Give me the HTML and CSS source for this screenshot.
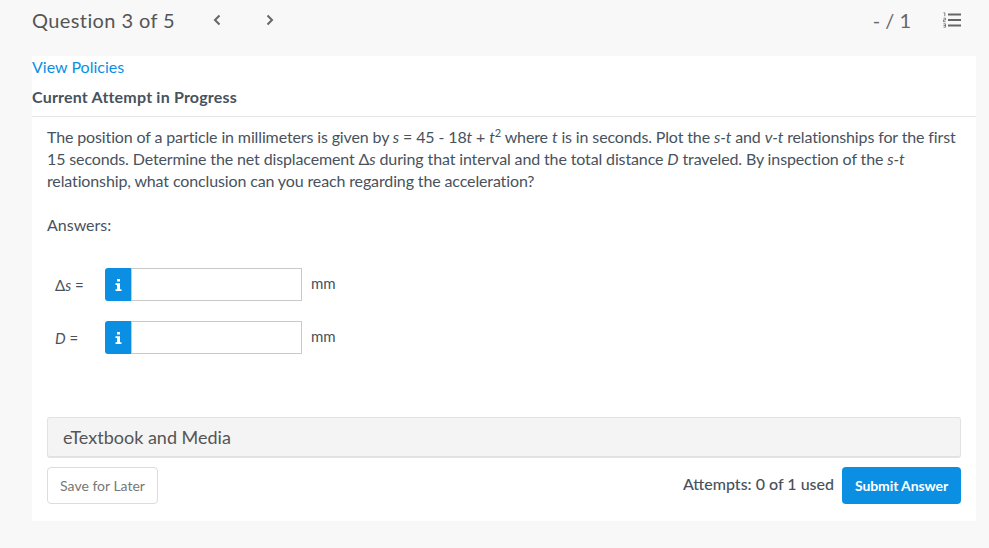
FILE: index.html
```html
<!DOCTYPE html>
<html lang="en">
<head>
  <meta charset="UTF-8">
  <title>Question 3 of 5</title>
  <link rel="stylesheet" href="styles.css">
</head>
<body>
  <!-- question nav -->
  <div class="topbar">
    <div class="question-nav">
      <h1>Question 3 of 5</h1>
      <svg class="chevron chevron-prev" width="8" height="12" viewBox="0 0 8 12"><path d="M6.500 1.500 2 6l4.500 4.500"/></svg>
      <svg class="chevron" width="8" height="12" viewBox="0 0 8 12"><path d="M1.500 1.500 6 6l-4.500 4.500"/></svg>
    </div>
    <div class="score">
      <span>- / 1</span>
      <svg class="list-icon" width="18" height="16" viewBox="0 0 18 16">
        <path class="lines" d="M5 2.500h13M5 8h13M5 13.500h13"/>
        <path class="nums" d="M.5 .8h1.300v3.400M.5 6.200h2v1.700h-2v1.800h2M.5 11.800h2v3.400h-2M.5 13.500h2"/>
      </svg>
    </div>
  </div>

  <div class="panel">
    <a class="policies" href="#">View Policies</a>
    <h2>Current Attempt in Progress</h2>

    <div class="question">
      <p class="prompt">The position of a particle in millimeters is given by <i>s</i> = 45 - 18<i>t</i> + <i>t</i><sup>2</sup> where <i>t</i> is in seconds. Plot the <i>s-t</i> and <i>v-t</i> relationships for the first<br>15 seconds. Determine the net displacement Δ<i>s</i> during that interval and the total distance <i>D</i> traveled. By inspection of the <i>s-t</i><br>relationship, what conclusion can you reach regarding the acceleration?</p>

      <p class="answers-label">Answers:</p>

      <div class="answer-row">
        <span class="answer-name">Δ<i>s</i> =</span>
        <span class="info-btn"><svg width="7" height="12" viewBox="0 0 7 12"><path d="M2 0h3v2.600H2zM.5 4.200H5v6.100h1.500V12H.5v-1.700H2V5.900H.5z"/></svg></span>
        <input class="answer-input" type="text">
        <span class="unit">mm</span>
      </div>
      <div class="answer-row">
        <span class="answer-name"><i>D</i> =</span>
        <span class="info-btn"><svg width="7" height="12" viewBox="0 0 7 12"><path d="M2 0h3v2.600H2zM.5 4.200H5v6.100h1.500V12H.5v-1.700H2V5.900H.5z"/></svg></span>
        <input class="answer-input" type="text">
        <span class="unit">mm</span>
      </div>

      <div class="media-box">eTextbook and Media</div>

      <div class="actions">
        <button class="save-btn">Save for Later</button>
        <div class="submit-group">
          <span class="attempts">Attempts: 0 of 1 used</span>
          <button class="submit-btn">Submit Answer</button>
        </div>
      </div>
    </div>
  </div>
</body>
</html>
```

FILE: styles.css
```css
* {
  box-sizing: border-box;
  margin: 0;
  padding: 0;
}
body {
  font-family: Lato, "Liberation Sans", sans-serif;
  background-color: #f8f8f8;
  color: #47525d;
  height: 548px;
  overflow: hidden;
}
/* top row */
.topbar {
  height: 56px;
  padding: 0 28px 16px 32px;
  display: flex;
  align-items: center;
  justify-content: space-between;
}
.question-nav {
  display: flex;
  align-items: center;
}
.topbar h1 {
  font-size: 20px;
  font-weight: 400;
  color: #555;
  letter-spacing: 0.4px;
}
.chevron {
  margin-left: 45px;
  fill: none;
  stroke: #666;
  stroke-width: 2;
}
.chevron-prev {
  margin-left: 38px;
}
.score {
  display: flex;
  align-items: center;
  gap: 32px;
  font-size: 20px;
  color: #666;
}
.list-icon {
  fill: none;
  stroke: #666;
}
.list-icon .lines {
  stroke-width: 2;
}
.list-icon .nums {
  stroke-width: 0.8;
}
/* white panel */
.panel {
  width: 944px;
  height: 465px;
  margin-left: 32px;
  background-color: #fff;
}
.policies {
  display: block;
  padding-top: 2px;
  font-size: 16px;
  line-height: 18px;
  color: #0a8fe3;
  text-decoration: none;
}
.panel h2 {
  margin-top: 12px;
  padding-bottom: 10px;
  font-size: 16px;
  line-height: 18px;
  font-weight: 700;
  letter-spacing: 0.2px;
  color: #47525d;
  border-bottom: 1px solid #e6e6e6;
}
.question {
  padding: 9px 15px 0;
}
.prompt {
  font-size: 16px;
  line-height: 22px;
  letter-spacing: -0.13px;
}
.prompt sup {
  font-size: 11px;
  line-height: 0;
}
.answers-label {
  margin-top: 22px;
  margin-bottom: 32px;
  font-size: 16px;
  line-height: 22px;
}
.answer-row {
  display: flex;
  align-items: center;
  height: 33px;
  margin-bottom: 20px;
  font-size: 15px;
}
.answer-name {
  width: 58px;
  padding-left: 8px;
}
.info-btn {
  width: 26px;
  height: 33px;
  display: flex;
  align-items: center;
  justify-content: center;
  background-color: #0a8fe3;
  border-radius: 3px 0 0 3px;
  fill: #fff;
}
.answer-input {
  width: 171px;
  height: 33px;
  border: 1px solid #c9c9c9;
  background-color: #fff;
}
.unit {
  margin-left: 9px;
  margin-bottom: 3px;
}
.media-box {
  height: 41px;
  margin-top: 63px;
  padding-left: 15px;
  display: flex;
  align-items: center;
  background-color: #f4f4f4;
  border: 1px solid #e2e2e2;
  border-bottom-width: 2px;
  border-radius: 3px;
  font-size: 18px;
  color: #555;
}
.actions {
  display: flex;
  justify-content: space-between;
  margin-top: 9px;
}
.save-btn {
  width: 111px;
  height: 37px;
  background-color: #fff;
  border: 1px solid #dcdcdc;
  border-radius: 4px;
  font-family: inherit;
  font-size: 14px;
  color: #777;
}
.submit-group {
  display: flex;
  align-items: flex-start;
  gap: 8px;
}
.attempts {
  margin-top: 7px;
  font-size: 16px;
  line-height: 20px;
  font-weight: 500;
}
.submit-btn {
  width: 119px;
  height: 37px;
  background-color: #0a8fe3;
  border: 0;
  border-radius: 4px;
  font-family: inherit;
  font-size: 14px;
  font-weight: 700;
  letter-spacing: -0.1px;
  color: #fff;
}
```
